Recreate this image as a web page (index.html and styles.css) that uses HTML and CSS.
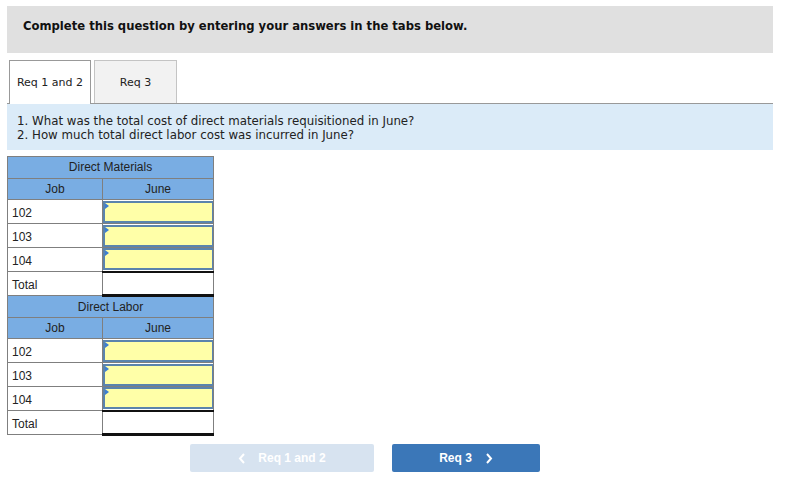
FILE: index.html
```html
<!DOCTYPE html>
<html>
<head>
<meta charset="utf-8">
<link rel="stylesheet" href="styles.css">
</head>
<body>
<div class="page">
  <div class="banner">Complete this question by entering your answers in the tabs below.</div>
  <div class="tabs">
    <div class="tab active">Req 1 and 2</div>
    <div class="tab">Req 3</div>
  </div>
  <div class="prompt">
    <div>1. What was the total cost of direct materials requisitioned in June?</div>
    <div>2. How much total direct labor cost was incurred in June?</div>
  </div>
  <table class="grid">
    <tr class="title"><td colspan="2">Direct Materials</td></tr>
    <tr class="head"><td class="c1">Job</td><td class="c2">June</td></tr>
    <tr class="row"><td class="label">102</td><td class="inp"><div class="box"></div></td></tr>
    <tr class="row"><td class="label">103</td><td class="inp"><div class="box"></div></td></tr>
    <tr class="row"><td class="label">104</td><td class="inp"><div class="box"></div></td></tr>
    <tr class="row total"><td class="label">Total</td><td class="sum"></td></tr>
    <tr class="title"><td colspan="2">Direct Labor</td></tr>
    <tr class="head"><td class="c1">Job</td><td class="c2">June</td></tr>
    <tr class="row"><td class="label">102</td><td class="inp"><div class="box"></div></td></tr>
    <tr class="row"><td class="label">103</td><td class="inp"><div class="box"></div></td></tr>
    <tr class="row"><td class="label">104</td><td class="inp"><div class="box"></div></td></tr>
    <tr class="row total"><td class="label">Total</td><td class="sum"></td></tr>
  </table>
  <div class="nav">
    <div class="btn prev"><svg width="8" height="11" viewBox="0 0 8 11"><path d="M6 1 L2 5.5 L6 10" fill="none" stroke="#fff" stroke-width="2"/></svg><span>Req 1 and 2</span></div>
    <div class="btn next"><span>Req 3</span><svg width="8" height="11" viewBox="0 0 8 11"><path d="M2 1 L6 5.5 L2 10" fill="none" stroke="#fff" stroke-width="2"/></svg></div>
  </div>
</div>
</body>
</html>
```
FILE: styles.css
```css
html, body { margin: 0; padding: 0; background: #fff; }
.page { padding: 6px 0 0 7px; width: 766px; }
.banner {
  background: #e0e0e0;
  height: 47px;
  box-sizing: border-box;
  padding: 13px 0 0 16px;
  font-family: "DejaVu Sans", Verdana, sans-serif;
  font-weight: bold;
  font-size: 11.6px;
  color: #111;
}
.tabs {
  display: flex;
  gap: 3px;
  margin-top: 7px;
  padding-left: 2px;
  border-bottom: 1px solid #999;
  height: 43px;
}
.tab {
  width: 83px;
  height: 43px;
  box-sizing: border-box;
  display: flex;
  align-items: center;
  justify-content: center;
  font-family: "DejaVu Sans", Verdana, sans-serif;
  font-size: 11px;
  color: #222;
  background: #f2f2f2;
  border: 1px solid #c4c4c4;
  border-bottom: none;
}
.tab.active {
  background: #fff;
  border-color: #999;
  width: 82px;
  height: 44px;
  margin-bottom: -1px;
}
.prompt {
  background: #dbebf8;
  height: 46px;
  box-sizing: border-box;
  padding: 10px 0 0 10px;
  font-family: "DejaVu Sans", Verdana, sans-serif;
  font-size: 11.8px;
  line-height: 14px;
  color: #222;
}
.grid {
  margin-top: 6px;
  border-collapse: collapse;
  width: 207px;
  font-family: "Liberation Sans", Arial, sans-serif;
  font-size: 12px;
  line-height: 14px;
  color: #222;
}
.grid td { border: 1px solid #7f7f7f; padding: 0; }
.grid .title { height: 22px; }
.grid .head { height: 21px; }
.grid .row { height: 24px; }
.grid .title td, .grid .head td {
  background: #79ade3;
  text-align: center;
  padding-bottom: 1px;
}
.grid .c1 { width: 94px; }
.grid .label { padding-left: 4px; padding-top: 2px; background: #fff; }
.box {
  position: relative;
  height: 22px;
  border: 2px solid #5b84ad;
  border-right-width: 1px;
  box-sizing: border-box;
  background: #ffffa8;
}
.box::before {
  content: "";
  position: absolute;
  left: 0; top: 0;
  border-left: 4px solid #3d7fd1;
  border-top: 3px solid transparent;
  border-bottom: 3px solid transparent;
}
.grid .sum {
  border-top: 2px solid #111;
  border-bottom: 3px solid #111;
  background: #fff;
}
.nav {
  display: flex;
  gap: 18px;
  margin: 8px 0 0 183px;
}
.btn {
  height: 28px;
  display: flex;
  align-items: center;
  justify-content: center;
  border-radius: 2px;
  font-family: "Liberation Sans", Arial, sans-serif;
  font-weight: bold;
  font-size: 12px;
  color: #fff;
}
.prev { width: 184px; background: #d7e3f0; gap: 12px; }
.next { width: 148px; background: #3b77b8; gap: 13px; }
```
